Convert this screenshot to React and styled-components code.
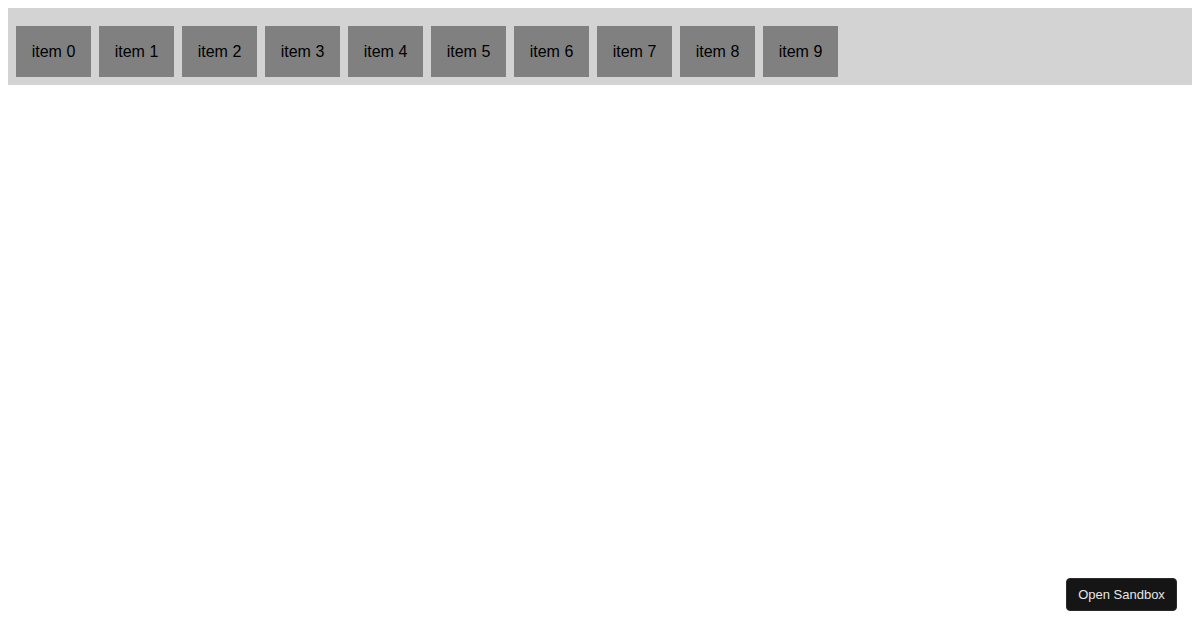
import React from 'react'
import styled, { createGlobalStyle } from 'styled-components'

const items = Array.from({ length: 10 }, (_, i) => `item ${i}`)

function App() {
  return (
    <>
      <GlobalStyle />
      <Bar>
        {items.map((label) => (
          <Item key={label}>{label}</Item>
        ))}
      </Bar>
      <SandboxButton>Open Sandbox</SandboxButton>
    </>
  )
}

const GlobalStyle = createGlobalStyle`
body {
  margin: 8px;
  font-family: "Liberation Sans", Arial, sans-serif;
  background: white;
}
`

const Bar = styled.div`
display: flex;
gap: 8px;
padding: 18px 8px 8px;
background-color: lightgray;
`

const Item = styled.div`
width: 75px;
height: 51px;
box-sizing: border-box;
display: flex;
align-items: center;
justify-content: center;
background-color: gray;
color: black;
font-size: 16px;
`

const SandboxButton = styled.button`
position: fixed;
right: 23px;
bottom: 19px;
width: 111px;
height: 33px;
border: 1px solid #2a2a2a;
border-radius: 4px;
background-color: #151515;
color: #e6e6e6;
font-family: "Liberation Sans", Arial, sans-serif;
font-size: 13px;
padding: 0;
cursor: pointer;
`

export default App
